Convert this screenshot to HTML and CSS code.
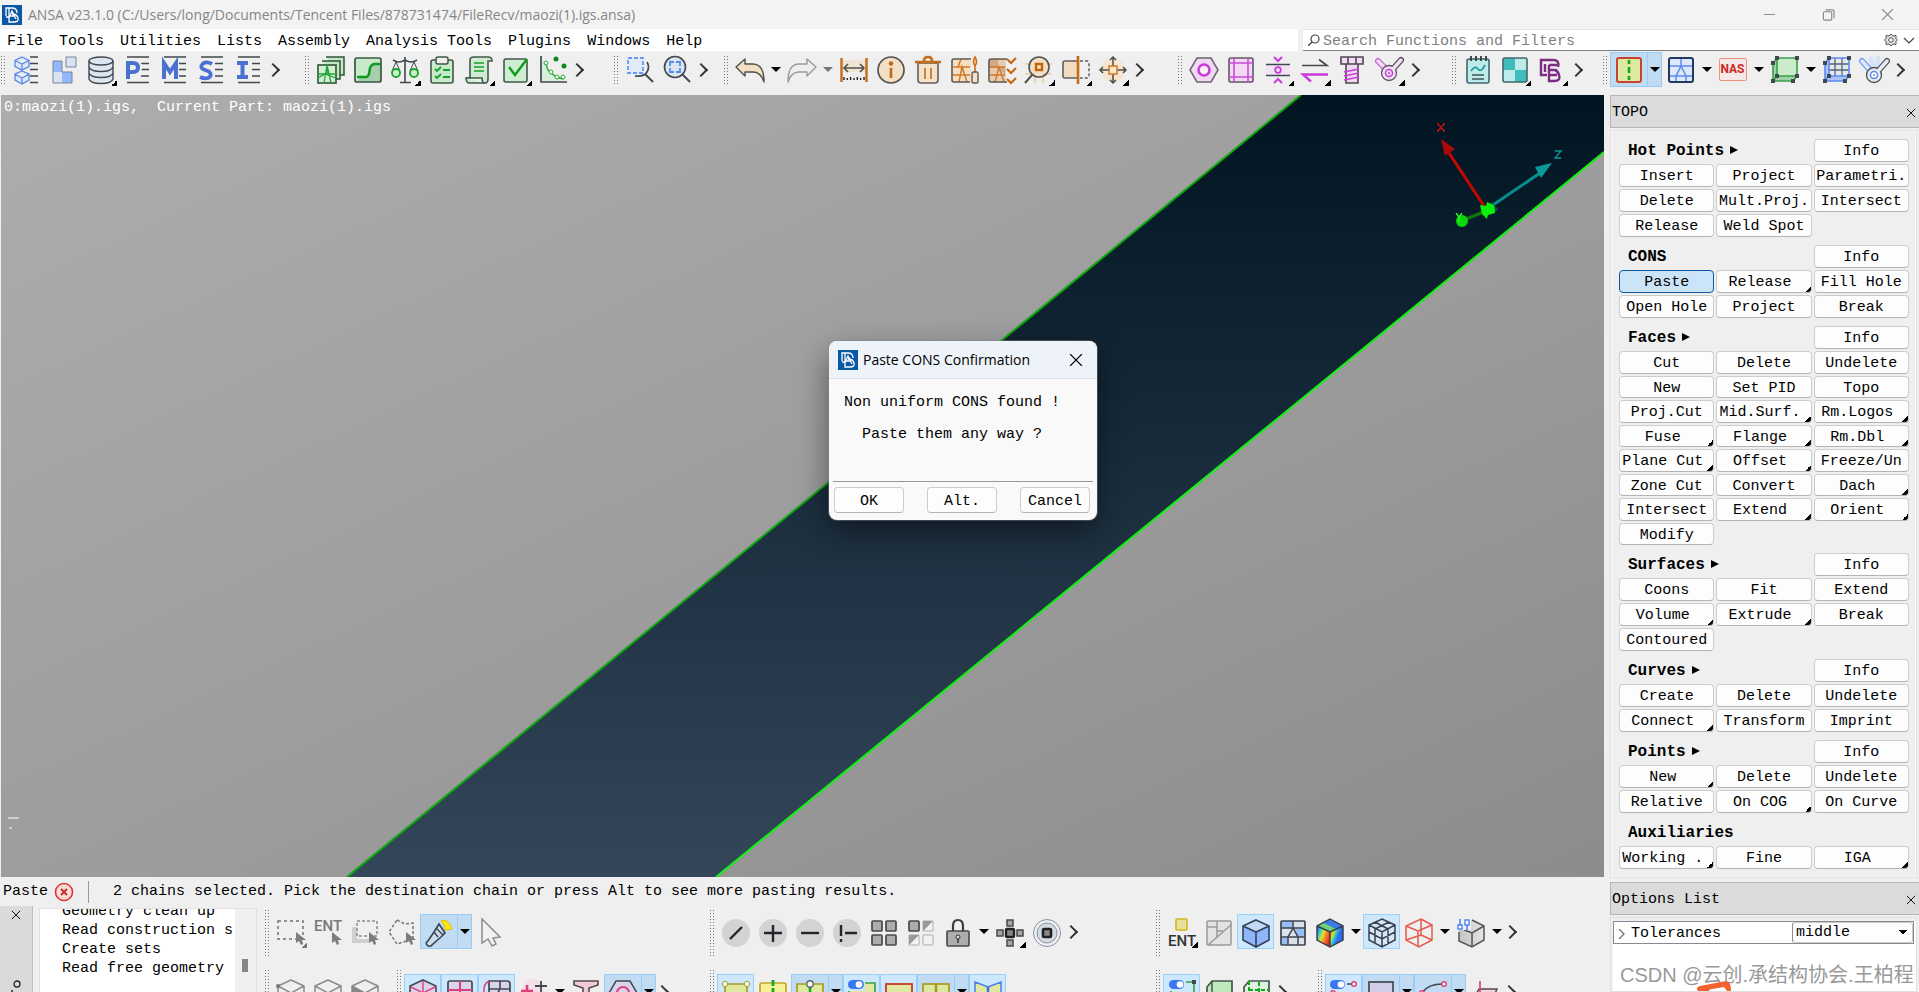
FILE: index.html
```html
<!DOCTYPE html>
<html lang="en">
<head>
<meta charset="utf-8">
<title>ANSA v23.1.0</title>
<link rel="stylesheet" href="styles.css">
</head>
<body>
<svg class="defs" aria-hidden="true">
  <defs>
    <symbol id="logo" viewBox="0 0 20 20"><rect width="20" height="20" fill="#0a57a4"/><path d="M4 11V3h6q5 0 5 5M4 12h3M7 3v14h5q5 0 4-4-1-4-6-4M7 13l3-7 4 8M8 11h5" fill="none" stroke="#fff" stroke-width="1.300"/></symbol>
    <symbol id="cross" viewBox="0 0 12 12"><path d="M1 1l10 10M11 1L1 11" fill="none" stroke="currentColor" stroke-width="1.100"/></symbol>
    <symbol id="cursor" viewBox="0 0 10 13"><path d="M0 0v11l3-2 2 4 2-1-1-4h4z" fill="#7d7d7d"/></symbol>
    <symbol id="lines" viewBox="0 0 30 30"><path d="M4 2h22M18 8.500h8M18 14.500h8M18 21h8M4 27.500h22" stroke="#42484f" stroke-width="1.700"/></symbol>
    <symbol id="graycube" viewBox="0 0 30 30"><path d="M15 2l13 6v14l-13 7-13-7V8zM2 8l13 7 13-7M15 15v14" fill="none" stroke="#8b8b8b" stroke-width="1.500" stroke-linejoin="round"/></symbol>
    <linearGradient id="band" x1="0" y1="0" x2="0" y2="1"><stop offset="0" stop-color="#011421"/><stop offset=".5" stop-color="#1a2d3d"/><stop offset="1" stop-color="#34475a"/></linearGradient>
    <linearGradient id="heat" x1="0" y1="0" x2="1" y2=".6"><stop offset="0" stop-color="#2451e8"/><stop offset=".25" stop-color="#28c3d5"/><stop offset=".5" stop-color="#d9e52a"/><stop offset=".75" stop-color="#f4772a"/><stop offset="1" stop-color="#e52b20"/></linearGradient>
    <linearGradient id="heat2" x1="0" y1="0" x2="1" y2=".6"><stop offset="0" stop-color="#e52b20"/><stop offset=".2" stop-color="#f4a72a"/><stop offset=".35" stop-color="#c9e52a"/><stop offset=".5" stop-color="#28c3d5"/><stop offset=".7" stop-color="#2f6af0"/></linearGradient>
    <linearGradient id="steel" x1="0" y1="0" x2="1" y2="0"><stop offset="0" stop-color="#c4c4c4"/><stop offset="1" stop-color="#e4e4e4"/></linearGradient>
  </defs>
</svg>

<header class="titlebar">
  <svg class="app-logo"><use href="#logo"/></svg>
  <span class="title">ANSA v23.1.0 (C:/Users/long/Documents/Tencent Files/878731474/FileRecv/maozi(1).igs.ansa)</span>
  <div class="controls">
    <button type="button" aria-label="Minimize"><svg viewBox="0 0 14 14"><path d="M1 7h12" stroke="currentColor"/></svg></button>
    <button type="button" aria-label="Restore"><svg viewBox="0 0 14 14"><rect x="1.500" y="4" width="9" height="9" rx="1.500" fill="none" stroke="currentColor" stroke-width="1.200"/><path d="M4 2h7q2 0 2 2v7" fill="none" stroke="currentColor" stroke-width="1.200"/></svg></button>
    <button type="button" aria-label="Close"><svg><use href="#cross"/></svg></button>
  </div>
</header>

<div class="menurow">
  <nav class="menu">
    <button type="button">File</button><button type="button">Tools</button><button type="button">Utilities</button><button type="button">Lists</button><button type="button">Assembly</button><button type="button">Analysis Tools</button><button type="button">Plugins</button><button type="button">Windows</button><button type="button">Help</button>
  </nav>
  <div class="search">
    <svg class="s12" viewBox="0 0 12 12"><circle cx="7" cy="5" r="4" fill="none" stroke="#444" stroke-width="1.200"/><path d="M4 8L0 12" stroke="#444" stroke-width="1.300"/></svg>
    <input type="text" aria-label="Search Functions and Filters" placeholder="Search Functions and Filters">
    <button type="button" aria-label="Settings"><svg class="s14" viewBox="0 0 14 14"><path d="M7 1l2 2 3-.500v3L13.500 7 12 8.500v3L9 11l-2 2-2-2-3 .500v-3L.500 7 2 5.500v-3L5 3z" fill="#ddd" stroke="#555"/><circle cx="7" cy="7" r="2.200" fill="#fff" stroke="#555"/></svg></button>
    <button type="button" aria-label="More"><svg class="s12" viewBox="0 0 12 12"><path d="M1 4l5 5 5-5" fill="none" stroke="#444" stroke-width="1.200"/></svg></button>
  </div>
</div>

<div class="topbars">
  <div class="tb">
    <i class="grip"></i>
    <button class="tool" aria-label="Parts"><svg viewBox="0 0 30 30"><use href="#lines"/><path d="M2 1h16v28H2z" fill="#efefef"/><path d="M10 2l7 3.500v6L10 15l-7-3.500v-6zM3 5.500L10 9l7-3.500M10 9v6M10 16l7 3v6l-7 4-7-4v-6zM3 19l7 4 7-4M10 23v5" fill="#dbe7fb" stroke="#5b87e0" stroke-width="1.300"/></svg></button>
    <button class="tool" aria-label="Properties"><svg viewBox="0 0 30 30"><path d="M4 6h9v11h10v11H4z" fill="#93b8fb"/><path d="M4 17h9v11H4zM17 2h10v10H17z" fill="#d7e3f4"/><path d="M4 6h9v11h10v11H4zM17 2h10v10H17z" fill="none" stroke="#788594" stroke-width="1"/></svg></button>
    <button class="tool fly" aria-label="Database"><svg viewBox="0 0 30 30"><path d="M3 6v18c2 6 22 6 24 0V6" fill="#dce6f3"/><ellipse cx="15" cy="6" rx="12" ry="4" fill="#dce6f3"/><path d="M3 6v18c2 6 22 6 24 0V6M3 12c2 6 22 6 24 0M3 18c2 6 22 6 24 0" fill="none" stroke="#42484f" stroke-width="1.400"/><ellipse cx="15" cy="6" rx="12" ry="4" fill="none" stroke="#42484f" stroke-width="1.400"/></svg></button>
    <button class="tool" aria-label="Property list"><svg viewBox="0 0 30 30"><use href="#lines"/><path d="M5 23V8h5q5 0 5 4.500T10 17H6" fill="none" stroke="#efefef" stroke-width="8"/><path d="M5 24V8h5q5 0 5 4.500T10 17H6" fill="none" stroke="#4a70d2" stroke-width="4"/></svg></button>
    <button class="tool" aria-label="Material list"><svg viewBox="0 0 30 30"><use href="#lines"/><path d="M2 5h17v20H2z" fill="#efefef"/><path d="M4 24V8l6 9 6-9v16" fill="none" stroke="#4a70d2" stroke-width="4"/></svg></button>
    <button class="tool" aria-label="Set list"><svg viewBox="0 0 30 30"><use href="#lines"/><path d="M2 5h15v20H2z" fill="#efefef"/><path d="M15 9q-5-3-9-.500-4 4 1 6l5 2q4 4-1 6.500-4 1-8-1" fill="none" stroke="#4a70d2" stroke-width="3.800"/></svg></button>
    <button class="tool" aria-label="Include list"><svg viewBox="0 0 30 30"><use href="#lines"/><path d="M2 5h13v20H2z" fill="#efefef"/><path d="M3 8h11M3 22h11M8.500 8v14" fill="none" stroke="#4a70d2" stroke-width="4"/></svg></button>
    <button class="chev" aria-label="More"></button>
  </div>
  <div class="tb">
    <i class="grip"></i>
    <button class="tool" aria-label="Mesh"><svg viewBox="0 0 30 30"><path d="M10 2h18v18h-4M6 6h18v18h-4" fill="#c5e6c7" stroke="#2f5636" stroke-width="1.500"/><rect x="2" y="10" width="18" height="18" fill="#d3efd3" stroke="#2f5636" stroke-width="1.600"/><path d="M2 19h18M2 23l7-4 11 4M8 28l3-18 4 18M11 10v9" stroke="#22a53a" stroke-width="1.300" fill="none"/></svg></button>
    <button class="tool" aria-label="Function"><svg viewBox="0 0 30 30"><rect x="2" y="3" width="26" height="24" rx="2" fill="#c9e9cc"/><path d="M8 22h5q3 0 3-5t4-7h8v17H3z" fill="#a7cfae"/><rect x="2" y="3" width="26" height="24" rx="2" fill="none" stroke="#39593e" stroke-width="1.700"/><path d="M4 22h9q3 0 3.500-6T21 9h6" fill="none" stroke="#0e9a1e" stroke-width="2.600"/></svg></button>
    <button class="tool fly" aria-label="Balance"><svg viewBox="0 0 30 30"><path d="M15 2v25M10 27.500h11M3 5q6 4 12 0 6 4 12 0" fill="none" stroke="#42484f" stroke-width="1.600"/><path d="M6 7l-4 9M6 7l4 9M24 7l-4 9M24 7l4 9" stroke="#42484f"/><circle cx="6" cy="18" r="4" fill="#c9f0cc" stroke="#1aa52a" stroke-width="1.800"/><circle cx="24" cy="18" r="4" fill="#c9f0cc" stroke="#1aa52a" stroke-width="1.800"/></svg></button>
    <button class="tool" aria-label="Checks"><svg viewBox="0 0 30 30"><rect x="4" y="5" width="22" height="23" rx="2" fill="#c9e9cc" stroke="#42584a" stroke-width="1.600"/><rect x="9" y="2" width="12" height="7" rx="2" fill="#eee" stroke="#42584a" stroke-width="1.500"/><path d="M8 14l2 2 4-4M8 21l2 2 4-4" fill="none" stroke="#14a024" stroke-width="1.800"/><path d="M16 15h7M16 22h7" stroke="#14a024" stroke-width="2"/></svg></button>
    <button class="tool fly" aria-label="Script"><svg viewBox="0 0 30 30"><path d="M10 2h14q4 0 4 4h-4v18q0 4-3 4H6q-4 0-4-5h4V5q0-3 4-3z" fill="#d0ebd2" stroke="#42584a" stroke-width="1.600"/><path d="M2 23h16q0 5 3 5" fill="#e9f5ea" stroke="#42584a" stroke-width="1.600"/><path d="M10 8h10M10 12h10M10 16h10" stroke="#14a024" stroke-width="1.600"/></svg></button>
    <button class="tool fly" aria-label="Verify"><svg viewBox="0 0 30 30"><rect x="3" y="4" width="23" height="23" rx="2" fill="#cdeed0" stroke="#42584a" stroke-width="1.600"/><path d="M8 12l6 8L26 4" fill="none" stroke="#0f9c1c" stroke-width="2.400"/></svg></button>
    <button class="tool" aria-label="Plot"><svg viewBox="0 0 30 30"><path d="M4 2v25h24L18 22 10 16z" fill="#d8efd9"/><path d="M3 1v26h26" fill="none" stroke="#42484f" stroke-width="1.700"/><path d="M7 7l3 8 8 7 7 2" fill="none" stroke="#2aa83c" stroke-width="1.400"/><g fill="#fff" stroke="#2aa83c"><circle cx="8" cy="8" r="2"/><circle cx="13" cy="17" r="2"/><circle cx="19" cy="22" r="2"/><circle cx="25" cy="22" r="2"/></g><circle cx="18" cy="4" r="2.500" fill="#118a1c"/><circle cx="26" cy="11" r="2.500" fill="#118a1c"/></svg></button>
    <button class="chev" aria-label="More"></button>
  </div>
  <div class="tb">
    <i class="grip"></i>
    <button class="tool" aria-label="Zoom window"><svg viewBox="0 0 30 30"><path d="M22 7q3 5 0 10-3 5-12 4" fill="none" stroke="#42484f" stroke-width="1.700"/><rect x="3" y="3" width="15" height="15" fill="#e2ebf8" stroke="#639af8" stroke-width="1.800" stroke-dasharray="4 2"/><path d="M20 19l8 8" stroke="#42484f" stroke-width="1.900"/></svg></button>
    <button class="tool" aria-label="Zoom all"><svg viewBox="0 0 30 30"><circle cx="13" cy="12" r="10.500" fill="#dfe5ee" stroke="#42484f" stroke-width="1.600"/><path d="M8 11V7h4M14 7h4v4M18 13v4h-4M12 17H8v-4" fill="none" stroke="#4e8df6" stroke-width="1.800"/><path d="M20 19l8 8" stroke="#42484f" stroke-width="1.900"/></svg></button>
    <button class="chev" aria-label="More"></button>
  </div>
  <div class="tb">
    <i class="grip"></i>
    <button class="tool" aria-label="Undo"><svg viewBox="0 0 30 30"><path d="M1 12l9-8v5h8q11 0 11 18-3-10-11-10h-8v4z" fill="#f3e0c4" stroke="#51504c" stroke-width="1.400" stroke-linejoin="round"/></svg></button>
    <button class="drop" aria-label="Undo history"></button>
    <button class="tool" aria-label="Redo"><svg viewBox="0 0 30 30"><path d="M29 12l-9-8v5h-8Q1 9 1 27q3-10 11-10h8v4z" fill="#eee" stroke="#9a9a9a" stroke-width="1.400" stroke-linejoin="round"/></svg></button>
    <button class="drop gray" aria-label="Redo history"></button>
    <button class="tool" aria-label="Measure"><svg viewBox="0 0 30 30"><path d="M3 5h24v12H3z" fill="#f0e4d4"/><path d="M2.500 3v24M27.500 3v24" stroke="#c66c18" stroke-width="2.400"/><path d="M6 13h18M9 9l-4 4 4 4M21 9l4 4-4 4" fill="none" stroke="#50504e" stroke-width="1.600"/><path d="M5 25v-3M8.300 25v-2M11.600 25v-3M15 25v-2M18.300 25v-3M21.600 25v-2M25 25v-3" stroke="#222" stroke-width="1.400"/></svg></button>
    <button class="tool" aria-label="Information"><svg viewBox="0 0 30 30"><circle cx="15" cy="15" r="13" fill="#f3dfc3" stroke="#55534f" stroke-width="1.700"/><circle cx="15" cy="8.500" r="2.200" fill="#bd6b12"/><path d="M15 13v10" stroke="#bd6b12" stroke-width="2.600"/></svg></button>
    <button class="tool" aria-label="Delete"><svg viewBox="0 0 30 30"><path d="M5 8h20v17q0 3-3 3H8q-3 0-3-3z" fill="#f4e3cb" stroke="#62605c" stroke-width="1.600"/><path d="M2 7h26M11 6q0-4 4-4t4 4" fill="none" stroke="#c66c18" stroke-width="2.600"/><path d="M12 13v11M18 13v11" stroke="#c66c18" stroke-width="1.600"/></svg></button>
    <button class="tool" aria-label="Mesh tool"><svg viewBox="0 0 30 30"><path d="M2 4h19v23H2z" fill="#f5dfc2"/><path d="M3 12h17M3 20h17M8 12l3-8M9 27l3-15 5 15" fill="none" stroke="#cf7a2a" stroke-width="1.500"/><path d="M21 4H4q-2 0-2 2v19q0 2 2 2h16" fill="none" stroke="#5f5951" stroke-width="1.600"/><path d="M25 2q-3 5 0 9 3-4 0-9zM25 11v6" fill="#f5dfc2" stroke="#cf6d18" stroke-width="1.600"/><rect x="22" y="17" width="6" height="11" rx="1.500" fill="#f2e2cc" stroke="#5f5951" stroke-width="1.400"/></svg></button>
    <button class="tool" aria-label="Mesh checks"><svg viewBox="0 0 30 30"><path d="M2 4h17v23H2z" fill="#e6cbb0"/><path d="M2 4h9v9H2zM11 12h7v8z" fill="#d3a987"/><path d="M3 12h15M3 20h15M8 27l4-15 5 15" fill="none" stroke="#cf7a2a" stroke-width="1.500"/><path d="M20 4H4q-2 0-2 2v19q0 2 2 2h16" fill="none" stroke="#5f5951" stroke-width="1.600"/><path d="M20 4l4 4 5-5M20 14l4 4 5-5M20 24l4 4 5-5" fill="none" stroke="#c9640c" stroke-width="2"/></svg></button>
    <button class="tool fly" aria-label="Inspect"><svg viewBox="0 0 30 30"><path d="M1 9h27M1 19h27M11 2v26M19 2v26" stroke="#f0cda2" stroke-width="1.600"/><circle cx="15" cy="12" r="10" fill="#f3dfc3" stroke="#55534f" stroke-width="1.600"/><rect x="12" y="9" width="6" height="6" fill="#f3dfc3" stroke="#c46209" stroke-width="2.400"/><path d="M8 20l-7 8" stroke="#55534f" stroke-width="2"/></svg></button>
    <button class="tool fly" aria-label="Cut plane"><svg viewBox="0 0 30 30"><rect x="2" y="6" width="15" height="17" rx="2" fill="#f1dcbf" stroke="#62605c" stroke-width="1.600"/><path d="M17 1v28" stroke="#c76a13" stroke-width="2.600"/><path d="M19 6h7q2 0 2 2v13q0 2-2 2h-7" fill="none" stroke="#62605c" stroke-width="1.500" stroke-dasharray="3 2"/></svg></button>
    <button class="tool fly" aria-label="Move"><svg viewBox="0 0 30 30"><circle cx="15" cy="15" r="12" fill="#f5e6d0"/><path d="M15 2v26M2 15h26M12 5l3-3 3 3M12 25l3 3 3-3M5 12l-3 3 3 3M25 12l3 3-3 3" fill="none" stroke="#4c4c4a" stroke-width="1.500"/><rect x="11" y="11" width="8" height="8" fill="#fbe6c8" stroke="#cc7a2c" stroke-width="1.500"/></svg></button>
    <button class="chev" aria-label="More"></button>
  </div>
  <div class="tb">
    <i class="grip"></i>
    <button class="tool" aria-label="Hexagon"><svg viewBox="0 0 30 30"><path d="M8 3h14l7 12-7 12H8L1 15z" fill="#f1d9f3" stroke="#6d6270" stroke-width="1.500"/><circle cx="15" cy="15" r="5.500" fill="#fbeefb" stroke="#cb3bdb" stroke-width="2.600"/></svg></button>
    <button class="tool" aria-label="Frame"><svg viewBox="0 0 30 30"><rect x="3" y="3" width="24" height="24" rx="2" fill="#f1d9f3" stroke="#5f5762" stroke-width="1.600"/><path d="M3 8h24M3 22h24M8 3v24M22 3v24" stroke="#cb4ad8" stroke-width="1.600"/></svg></button>
    <button class="tool fly" aria-label="Midline"><svg viewBox="0 0 30 30"><path d="M3 10h24v10H3z" fill="#f2e3f3"/><path d="M3 9.500h24M3 20.500h24" stroke="#42484f" stroke-width="1.600"/><path d="M11 2l4 4 4-4M11 28l4-4 4 4" fill="none" stroke="#cb3bdb" stroke-width="2"/><circle cx="15" cy="15" r="2.800" fill="#f9e9fb" stroke="#cb3bdb" stroke-width="1.800"/></svg></button>
    <button class="tool fly" aria-label="Swap"><svg viewBox="0 0 30 30"><path d="M2 10.500h25l-8-6" fill="none" stroke="#42484f" stroke-width="1.600"/><path d="M28 19.500H3l8 7" fill="none" stroke="#cb3bdb" stroke-width="2.400"/></svg></button>
    <button class="tool" aria-label="Bolt"><svg viewBox="0 0 30 30"><path d="M4 2h22v7H4zM11 2v7M19 2v7M9 9h12v19H9z" fill="#f1d9f3" stroke="#4d4850" stroke-width="1.600"/><path d="M7 17l15-3M7 21l15-3M7 25l15-3" stroke="#cb3bdb" stroke-width="1.500"/></svg></button>
    <button class="tool fly" aria-label="Connector"><svg viewBox="0 0 30 30"><path d="M4 6l7 7" stroke="#cb5ad8" stroke-width="6" stroke-linecap="round"/><path d="M4 6l7 7" stroke="#f4dff6" stroke-width="3.500" stroke-linecap="round"/><path d="M27 5l-8 9" stroke="#504b54" stroke-width="6" stroke-linecap="round"/><circle cx="15" cy="18" r="7.500" fill="#f1dff4" stroke="#605a64" stroke-width="1.300"/><path d="M27 5l-8 9" stroke="#f1dff4" stroke-width="3.500" stroke-linecap="round"/><circle cx="15" cy="18" r="3.500" fill="none" stroke="#cb3bdb" stroke-width="1.500"/><circle cx="15" cy="18" r="1" fill="#cb3bdb"/></svg></button>
    <button class="chev" aria-label="More"></button>
  </div>
  <div class="tb">
    <i class="grip"></i>
    <button class="tool" aria-label="Report"><svg viewBox="0 0 30 30"><rect x="4" y="4" width="22" height="24" rx="2" fill="#bdeaea" stroke="#42686a" stroke-width="1.600"/><path d="M8 1v5M13 1v5M18 1v5M23 1v5" stroke="#34383c" stroke-width="1.800"/><path d="M8 16q4-6 7-2t7-4" fill="none" stroke="#1c9a9a" stroke-width="1.700"/><path d="M9 20h12M9 24h12" stroke="#3f5657" stroke-width="1.500"/></svg></button>
    <button class="tool fly" aria-label="Checkerboard"><svg viewBox="0 0 30 30"><rect x="3" y="3" width="24" height="24" rx="2" fill="#bdeaea"/><path d="M3 3h12v12H3zM15 15h12v12H15z" fill="#41bcbc"/><rect x="3" y="3" width="24" height="24" rx="2" fill="none" stroke="#42686a" stroke-width="1.600"/></svg></button>
    <button class="tool fly" aria-label="Beta"><svg viewBox="0 0 30 30"><path d="M10 20H4V5h12q7 0 5 7M12 10h8M12 15h8M12 10v16h5q7 0 5-6-1-4-4-5M12 20h8M8 9v8" fill="none" stroke="#7d2b83" stroke-width="2.400"/></svg></button>
    <button class="chev" aria-label="More"></button>
  </div>
  <div class="tb">
    <i class="grip"></i>
    <span class="split"><button class="tool" aria-label="Topology"><svg viewBox="0 0 30 30"><rect x="3" y="3" width="24" height="24" rx="2" fill="#dde8a0" stroke="#c8432f" stroke-width="2"/><path d="M15 5v4M15 12v6M15 21v4" stroke="#17a622" stroke-width="2.600"/></svg></button><button class="drop" aria-label="Topology options"></button></span>
    <button class="tool" aria-label="Mesh module"><svg viewBox="0 0 30 30"><rect x="3" y="3" width="24" height="24" rx="2" fill="#dde8fa"/><path d="M3 11h24M3 21h24M15 3v8l-5 10v6M15 11l5 10v6" fill="none" stroke="#5b8af0" stroke-width="1.500"/><rect x="3" y="3" width="24" height="24" rx="2" fill="none" stroke="#20375f" stroke-width="2"/></svg></button>
    <button class="drop" aria-label="Mesh module options"></button>
    <button class="tool" aria-label="Nastran"><span class="nas">NAS</span></button>
    <button class="drop" aria-label="Solver options"></button>
    <button class="tool" aria-label="Box"><svg viewBox="0 0 30 30"><path d="M7 3h20v18l-4 5H3V8z" fill="#a3cfaa"/><path d="M7 3h20v18H7z" fill="#ccebcd"/><path d="M7 3h20v18H7zM3 8v18h20M3 8l4-5M3 26l4-5M23 26l4-5" fill="none" stroke="#35a244" stroke-width="1.600"/><path d="M5 1h4v4H5zM25 1h4v4h-4zM1 6h4v4H1zM5 19h4v4H5zM25 19h4v4h-4zM1 24h4v4H1zM21 24h4v4h-4z" fill="#42484f"/></svg></button>
    <button class="drop" aria-label="Box options"></button>
    <button class="tool" aria-label="Lattice"><svg viewBox="0 0 30 30"><path d="M7 3h20v18l-4 5H3V8z" fill="#a8c4f5"/><path d="M7 3h20v18H7z" fill="#e3e9f2"/><path d="M13 3v18M20 3v18M7 9h20M7 15h20" stroke="#5c6570" stroke-width="1.300"/><path d="M7 3h20v18H7zM3 8v18h20M3 8l4-5M3 26l4-5M23 26l4-5" fill="none" stroke="#5b8af0" stroke-width="1.600"/><path d="M5 1h4v4H5zM25 1h4v4h-4zM1 6h4v4H1zM5 19h4v4H5zM25 19h4v4h-4zM1 24h4v4H1zM21 24h4v4h-4z" fill="#42484f"/></svg></button>
    <button class="tool" aria-label="Kinematics"><svg viewBox="0 0 30 30"><path d="M12 4l2 9M19 3l-1 9" stroke="#d5e2f6" stroke-width="5" stroke-linecap="round"/><path d="M3 6l8 9" stroke="#6d9bf4" stroke-width="6" stroke-linecap="round"/><path d="M3 6l8 9" stroke="#dfe9fa" stroke-width="3.500" stroke-linecap="round"/><path d="M28 6l-8 9" stroke="#505760" stroke-width="6" stroke-linecap="round"/><circle cx="15" cy="20" r="7.500" fill="#e6e9ee" stroke="#505760" stroke-width="1.400"/><path d="M28 6l-8 9" stroke="#e6e9ee" stroke-width="3.500" stroke-linecap="round"/><circle cx="15" cy="20" r="3.500" fill="#fff" stroke="#5b8af0" stroke-width="1.500"/><circle cx="15" cy="20" r="1" fill="#5b8af0"/></svg></button>
    <button class="chev" aria-label="More"></button>
  </div>
</div>

<main class="main">
  <div class="left">
    <section class="viewport">
      <svg class="scene" viewBox="0 0 1603 782" preserveAspectRatio="none">
        <path d="M1300 0H1603V57L715 782H346z" fill="url(#band)"/>
        <path d="M1300 0L346 782" stroke="#0cab0c" stroke-width="2"/>
        <path d="M1603 57L715 782" stroke="#0df50d" stroke-width="2"/>
        <path d="M7 723h11M8 733h3" stroke="#fff"/>
      </svg>
      <svg class="triad" viewBox="0 0 130 110">
        <path d="M52 84L15 28" stroke="#cb0505" stroke-width="3"/>
        <path d="M7 14l14 10-10 7z" fill="#ab0a0a"/>
        <path d="M56 82l50-34" stroke="#0a8d8d" stroke-width="3"/>
        <path d="M118 38l-17 4 6 11z" fill="#0b9a9a"/>
        <path d="M58 76l6 9-9 5z" fill="#0b5555"/>
        <path d="M32 94l20-8" stroke="#0a7a0a" stroke-width="3"/>
        <path d="M46 80l6 1 1-4 7 3 1 8-7 2-1 4-5-5z" fill="#0bf00b"/>
        <circle cx="28" cy="96" r="6" fill="#0bd40b"/>
        <path d="M4 -1l6 7M10 -1L4 6M3 -1h2M9 -1h2M3 6h2M9 6h2" stroke="#cb1010" stroke-width="1.300"/>
        <path d="M121 26h6l-6 7h6" fill="none" stroke="#0b9a9a" stroke-width="1.300"/>
        <path d="M22 88l3 4 3-4M25 92v5" fill="none" stroke="#25ff25" stroke-width="1.300"/>
      </svg>
      <p class="partinfo">0:maozi(1).igs,&nbsp; Current Part: maozi(1).igs</p>
      <div class="dialog" role="dialog" aria-labelledby="dlg-title">
        <div class="dlg-head"><svg class="dlg-logo"><use href="#logo"/></svg><h2 id="dlg-title">Paste CONS Confirmation</h2><button type="button" aria-label="Close dialog"><svg class="s14"><use href="#cross"/></svg></button></div>
        <div class="dlg-body"><p>Non uniform CONS found !</p><p class="ask">Paste them any way ?</p></div>
        <div class="dlg-foot"><button type="button">OK</button><button type="button">Alt.</button><button type="button">Cancel</button></div>
      </div>
    </section>

    <div class="status">
      <span class="mode">Paste</span>
      <button type="button" aria-label="Cancel function"><svg viewBox="0 0 20 20"><circle cx="10" cy="10" r="8.500" fill="#fbdcd8" stroke="#d8392e" stroke-width="1.600"/><path d="M7 7l6 6M13 7l-6 6" stroke="#c92b20" stroke-width="1.800"/></svg></button>
      <span class="msg">2 chains selected. Pick the destination chain or press Alt to see more pasting results.</span>
    </div>

    <div class="bottom">
      <aside class="logstrip"><button type="button" aria-label="Close log"><svg class="s10"><use href="#cross"/></svg></button><svg class="pin" viewBox="0 0 14 12"><circle cx="8" cy="4" r="3" fill="none" stroke="#222" stroke-width="1.300"/><path d="M2 11h2" stroke="#222" stroke-width="1.500"/></svg></aside>
      <div class="log">
        <ul><li>Geometry clean up</li><li>Read construction s</li><li>Create sets</li><li>Read free geometry</li></ul>
        <div class="scroll"><i></i></div>
      </div>
      <div class="dock">
        <div class="col">
          <div class="tb">
            <i class="grip"></i>
            <button class="tool fly gray" aria-label="Box select"><svg viewBox="0 0 30 30"><path d="M2 3h25v18H2z" fill="none" stroke="#707070" stroke-width="1.500" stroke-dasharray="3 3"/><use href="#cursor" x="20" y="14" width="10" height="13"/></svg></button>
            <button class="tool" aria-label="Entity select"><svg viewBox="0 0 30 30"><text x="1" y="13" class="ent dim">ENT</text><use href="#cursor" x="19" y="14" width="10" height="13"/></svg></button>
            <button class="tool" aria-label="Shadow select"><svg viewBox="0 0 30 30"><path d="M2 9h5v12h12v4H2z" fill="#cfcfcf"/><path d="M7 3h20v15H7z" fill="none" stroke="#8a8a8a" stroke-width="1.500" stroke-dasharray="3 2"/><use href="#cursor" x="19" y="14" width="10" height="13"/></svg></button>
            <button class="tool" aria-label="Polygon select"><svg viewBox="0 0 30 30"><path d="M10 2l8 4 8-1v16l-16 5-8-12z" fill="none" stroke="#777" stroke-width="1.500" stroke-dasharray="3 2"/><use href="#cursor" x="19" y="14" width="10" height="13"/></svg></button>
            <span class="split"><button class="tool" aria-label="Highlight"><svg viewBox="0 0 30 30"><path d="M17 3q7-3 11 8l-7 1q0-6-4-9z" fill="#ffe81a" stroke="#e1b900"/><path d="M15 6l6 9-4 4-8 7q-3 4-6 1-2-2 1-4l6-9z" fill="#cadcf0" stroke="#38424e" stroke-width="1.600"/><path d="M12 10l7 7M10 14l4 5" stroke="#38424e" stroke-width="1.400"/></svg></button><button class="drop" aria-label="Highlight options"></button></span>
            <button class="tool" aria-label="Pointer"><svg viewBox="0 0 30 30"><path d="M6 1l18 18-7 1 3 6-4 2-4-7-6 4z" fill="#f2f2f2" stroke="#8c8c8c" stroke-width="1.500"/></svg></button>
          </div>
          <div class="pair">
            <div class="tb"><i class="grip"></i>
              <button class="tool" aria-label="Cube points"><svg viewBox="0 0 30 30"><use href="#graycube"/><circle cx="2" cy="8" r="2" fill="#777"/></svg></button>
              <button class="tool" aria-label="Cube wire"><svg viewBox="0 0 30 30"><use href="#graycube"/></svg></button>
              <button class="tool" aria-label="Cube face"><svg viewBox="0 0 30 30"><use href="#graycube"/><path d="M2 8l13 7v14L2 22z" fill="#888"/></svg></button>
            </div>
            <div class="tb near"><i class="grip"></i>
              <button class="tool lit" aria-label="Pink cube"><svg viewBox="0 0 30 30"><path d="M15 2l13 6v14l-13 7-13-7V8z" fill="#d9d3ec" stroke="#42484f" stroke-width="1.600"/><path d="M3 9l12 6 12-6M15 3v26" fill="none" stroke="#dd3f7d" stroke-width="1.400"/></svg></button>
              <button class="tool lit" aria-label="Pink grid"><svg viewBox="0 0 30 30"><rect x="3" y="3" width="24" height="25" rx="2" fill="#d9d3ec" stroke="#42484f" stroke-width="1.700"/><path d="M3 12h24M15 3v24" stroke="#dd3f7d" stroke-width="2"/></svg></button>
              <button class="tool lit" aria-label="Pink blocks"><svg viewBox="0 0 30 30"><path d="M7 3h18q3 0 3 3v20H7z" fill="#d9d3ec" stroke="#42484f" stroke-width="1.700"/><path d="M7 11h21M18 3v8l-4 7" stroke="#42484f" stroke-width="1.600" fill="none"/><path d="M7 3q-5 3-5 8v12" fill="none" stroke="#dd3f7d" stroke-width="1.500"/></svg></button>
              <button class="tool" aria-label="Add"><svg viewBox="0 0 30 30"><circle cx="14" cy="12" r="11" fill="#f3dfe6"/><path d="M8 7v12M2 13h12" stroke="#dd3f7d" stroke-width="2.600"/><path d="M22 3v11M16 8h12" stroke="#42484f" stroke-width="1.800"/></svg></button>
              <button class="drop" aria-label="Add options"></button>
              <button class="tool" aria-label="Beam"><svg viewBox="0 0 30 30"><path d="M3 3h24v4l-9 3v18h-6V10L3 7z" fill="#f3c9d8" stroke="#504850" stroke-width="1.600"/></svg></button>
              <span class="split"><button class="tool" aria-label="Hex view"><svg viewBox="0 0 30 30"><path d="M8 3h14l7 12-7 12H8L1 15z" fill="#d9d3ec" stroke="#42484f" stroke-width="1.500"/><circle cx="15" cy="15" r="6" fill="none" stroke="#dd3f7d" stroke-width="2"/></svg></button><button class="drop" aria-label="Hex options"></button></span>
              <button class="chev" aria-label="More"></button>
            </div>
          </div>
        </div>
        <div class="col">
          <div class="tb">
            <i class="grip"></i>
            <button class="tool" aria-label="Line"><svg viewBox="0 0 30 30"><circle cx="15" cy="15" r="14" fill="#d3d3d3"/><path d="M9 21L21 9" stroke="#23262a" stroke-width="2.400"/></svg></button>
            <button class="tool" aria-label="Plus"><svg viewBox="0 0 30 30"><circle cx="15" cy="15" r="14" fill="#d3d3d3"/><path d="M15 7v17M6 15h18" stroke="#23262a" stroke-width="2.400"/></svg></button>
            <button class="tool" aria-label="Minus"><svg viewBox="0 0 30 30"><circle cx="15" cy="15" r="14" fill="#d3d3d3"/><path d="M6 15h18" stroke="#23262a" stroke-width="2.400"/></svg></button>
            <button class="tool" aria-label="Not"><svg viewBox="0 0 30 30"><circle cx="15" cy="15" r="14" fill="#d3d3d3"/><path d="M9 7v11M9 21v3M13 15h12" stroke="#23262a" stroke-width="2.400"/></svg></button>
            <button class="tool" aria-label="All"><svg viewBox="0 0 30 30"><g fill="#adadad" stroke="#484848" stroke-width="1.700"><rect x="3" y="3" width="10" height="10" rx="1"/><rect x="17" y="3" width="10" height="10" rx="1"/><rect x="3" y="17" width="10" height="10" rx="1"/><rect x="17" y="17" width="10" height="10" rx="1"/></g></svg></button>
            <button class="tool" aria-label="Invert"><svg viewBox="0 0 30 30"><rect x="3" y="3" width="10" height="10" rx="1" fill="#adadad" stroke="#484848" stroke-width="1.700"/><g fill="#f2f2f2" stroke="#c3c3c3" stroke-width="1.500"><rect x="17" y="3" width="10" height="10" rx="1"/><rect x="3" y="17" width="10" height="10" rx="1"/><rect x="17" y="17" width="10" height="10" rx="1"/></g><path d="M17 13V3h10zM3 27V17h10z" fill="#999"/></svg></button>
            <button class="tool" aria-label="Lock"><svg viewBox="0 0 30 30"><path d="M10 14V8q0-6 5-6t5 6v6" fill="none" stroke="#3d3d3d" stroke-width="2.200"/><rect x="4" y="13" width="22" height="15" rx="1" fill="#adadad" stroke="#484848" stroke-width="1.600"/><circle cx="15" cy="19" r="2" fill="#ddd" stroke="#333"/><path d="M15 21v4" stroke="#333" stroke-width="1.500"/></svg></button>
            <button class="drop" aria-label="Lock options"></button>
            <button class="tool fly" aria-label="Neighbours"><svg viewBox="0 0 30 30"><g fill="#a6a6a6" stroke="#484848" stroke-width="1.500"><rect x="12" y="2" width="6" height="6"/><rect x="12" y="22" width="6" height="6"/><rect x="2" y="12" width="6" height="6"/><rect x="22" y="12" width="6" height="6"/></g><rect x="11" y="11" width="8" height="8" rx="1" fill="#888" stroke="#222" stroke-width="2.400"/></svg></button>
            <button class="tool" aria-label="Focus"><svg viewBox="0 0 30 30"><circle cx="15" cy="15" r="13.500" fill="#eef0f3" stroke="#8993a2"/><circle cx="15" cy="15" r="10" fill="#d3dae3" stroke="#8993a2"/><rect x="11" y="11" width="8" height="8" rx="1" fill="#888" stroke="#222" stroke-width="2.600"/></svg></button>
            <button class="chev" aria-label="More"></button>
          </div>
          <div class="tb">
            <i class="grip"></i>
            <button class="tool lit" aria-label="Edges"><svg viewBox="0 0 30 30"><path d="M4 6h22v22H4z" fill="#e0e99f" stroke="#ab9a25" stroke-width="1.700"/><circle cx="4" cy="6" r="2.700" fill="#fff" stroke="#ab9a25"/><circle cx="26" cy="6" r="2.700" fill="#fff" stroke="#ab9a25"/></svg></button>
            <button class="tool" aria-label="Green edges"><svg viewBox="0 0 30 30"><rect x="2" y="5" width="26" height="23" rx="2" fill="#f6f096" stroke="#c3a527" stroke-width="1.700"/><path d="M15 2v26M2 16h26" stroke="#17a622" stroke-width="2.800" stroke-dasharray="6 2"/></svg></button>
            <span class="split"><button class="tool" aria-label="Hot points"><svg viewBox="0 0 30 30"><path d="M2 6h26v22H2z" fill="#dde8a0" stroke="#ab9a25" stroke-width="1.700"/><path d="M15 9v19" stroke="#17a622" stroke-width="2.600"/><circle cx="15" cy="6" r="3.200" fill="#fff" stroke="#666" stroke-width="1.400"/></svg></button><button class="drop" aria-label="Hot point options"></button></span>
            <button class="tool lit" aria-label="Auto"><svg viewBox="0 0 30 30"><path d="M2 5h26v22H2z" fill="#e0e99f" stroke="#35a244" stroke-width="1.700"/><rect x="0" y="1" width="18" height="12" fill="#cde7fd"/><rect x="1" y="2" width="16" height="9" rx="4.500" fill="#3a78f0"/><circle cx="12" cy="6.500" r="3.300" fill="#fff"/></svg></button>
            <button class="tool lit" aria-label="Red edges"><svg viewBox="0 0 30 30"><rect x="2" y="6" width="26" height="23" fill="#e0e99f" stroke="#c8432f" stroke-width="1.900"/></svg></button>
            <span class="split"><button class="tool" aria-label="Joined"><svg viewBox="0 0 30 30"><rect x="2" y="6" width="26" height="23" fill="#dde8a0" stroke="#ab9a25" stroke-width="1.700"/><path d="M15 6v22" stroke="#ab9a25" stroke-width="2.600"/></svg></button><button class="drop" aria-label="Joined options"></button></span>
            <button class="tool lit" aria-label="Fold"><svg viewBox="0 0 30 30"><path d="M2 4l13 5 13-5v23l-13 3-13-3z" fill="#e0e99f" stroke="#4b7df0" stroke-width="1.500"/><path d="M15 9v20" stroke="#3a6df0" stroke-width="2.500"/></svg></button>
          </div>
        </div>
        <div class="col">
          <div class="tb">
            <i class="grip"></i>
            <button class="tool fly" aria-label="Entity colour"><svg viewBox="0 0 30 30"><rect x="9" y="1" width="11" height="11" rx="1" fill="#e6e09b" stroke="#d0b91f" stroke-width="1.600"/><text x="1" y="28" class="ent">ENT</text></svg></button>
            <button class="tool" aria-label="Half shade"><svg viewBox="0 0 30 30"><rect x="3" y="3" width="24" height="24" rx="1" fill="#e3e3e3" stroke="#9a9a9a" stroke-width="1.500"/><path d="M13 3v17M3 9h10M13 13h6M4 27L28 6" stroke="#9a9a9a" stroke-width="1.500" fill="none"/></svg></button>
            <button class="tool lit" aria-label="Shaded"><svg viewBox="0 0 30 30"><path d="M15 2l13 6v14l-13 7-13-7V8z" fill="#8fb5fb"/><path d="M15 2l13 6-13 6L2 8z" fill="#c5d9fb"/><path d="M15 2l13 6v14l-13 7-13-7V8zM2 8l13 6 13-6M15 14v15" fill="none" stroke="#344257" stroke-width="1.600"/></svg></button>
            <button class="tool" aria-label="Mesh view"><svg viewBox="0 0 30 30"><rect x="3" y="3" width="24" height="24" fill="#dbe1e9"/><path d="M3 3h11v7H3zM17 11h10v8h-8zM3 20h7v7H3z" fill="#9abcf7"/><path d="M3 10h24M3 19h24M15 3v7l-5 9v8M15 10l5 9v8" fill="none" stroke="#3b444f" stroke-width="1.500"/><rect x="3" y="3" width="24" height="24" rx="1" fill="none" stroke="#3b444f" stroke-width="1.700"/></svg></button>
            <button class="tool" aria-label="Contour"><svg viewBox="0 0 30 30"><path d="M2 8l13 6v15L2 22z" fill="url(#heat)"/><path d="M15 14l13-6v14l-13 7z" fill="url(#heat2)"/><path d="M15 1l13 7-13 6L2 8z" fill="#3a7de8"/><path d="M9 5l12 6-6 3L2 8z" fill="#6fd07c"/><path d="M15 1l13 7v14l-13 7-13-7V8zM2 8l13 6 13-6M15 14v15" fill="none" stroke="#333b48" stroke-width="1.400"/></svg></button>
            <button class="drop" aria-label="Contour options"></button>
            <button class="tool lit" aria-label="Wire cube"><svg viewBox="0 0 30 30"><path d="M15 1l13 6v15l-13 7-13-7V7zM2 7l13 7 13-7M15 14v15M8 4l13 7v15M22 4L8 11v15M2 14l13 7 13-7" fill="#d8e6f5" stroke="#38424e" stroke-width="1.500"/></svg></button>
            <button class="tool" aria-label="Red wire cube"><svg viewBox="0 0 30 30"><path d="M17 1l11 6v15l-13 7-13-7V8zM2 8l12 5 14-6M14 13v15M17 1v16l11 5M17 17L2 22" fill="none" stroke="#e75a4b" stroke-width="1.500"/></svg></button>
            <button class="drop" aria-label="Wire options"></button>
            <button class="tool" aria-label="View settings"><svg viewBox="0 0 30 30"><path d="M15 2l13 6v14l-13 7-12-6V9z" fill="url(#steel)"/><path d="M16 2l12 6v14l-12 7-13-6V14M8 12l8 3 12-7M16 15v14" fill="none" stroke="#555" stroke-width="1.500"/><path d="M0 0h15v12H0z" fill="#efefef"/><path d="M4 1v6M11 7v6" stroke="#4a80f0" stroke-width="1.500"/><rect x="2" y="7" width="4" height="4" fill="#fff" stroke="#4a80f0" stroke-width="1.400"/><rect x="9" y="2" width="4" height="5" fill="#fff" stroke="#4a80f0" stroke-width="1.400"/></svg></button>
            <button class="drop" aria-label="View options"></button>
            <button class="chev" aria-label="More"></button>
          </div>
          <div class="pair">
            <div class="tb"><i class="grip"></i>
              <button class="tool lit" aria-label="Auto green"><svg viewBox="0 0 30 30"><path d="M3 14h24v15H3z" fill="#b5e8dc"/><rect x="2" y="2" width="15" height="9" rx="4.500" fill="#3a78f0"/><circle cx="13" cy="6.500" r="3.300" fill="#fff"/><path d="M19 4h8v25M4 13v16" fill="none" stroke="#35a244" stroke-width="1.600"/><path d="M25 2h4v4h-4z" fill="#42484f"/></svg></button>
              <button class="tool" aria-label="Green solid"><svg viewBox="0 0 30 30"><path d="M8 3h20v26H3V9z" fill="#c0e8bd" stroke="#42584a" stroke-width="1.700"/><path d="M8 3v26" stroke="#42584a" stroke-width="1.500"/></svg></button>
              <button class="tool" aria-label="Green grid"><svg viewBox="0 0 30 30"><path d="M8 3h20v26H3V9z" fill="#e0f1df" stroke="#42584a" stroke-width="1.700"/><path d="M8 3v26M18 4v24M8 12h20" stroke="#17a622" stroke-width="2" stroke-dasharray="4 2"/></svg></button>
              <button class="chev" aria-label="More"></button>
            </div>
            <div class="tb far"><i class="grip"></i>
              <button class="tool lit" aria-label="Auto curve"><svg viewBox="0 0 30 30"><rect x="1" y="2" width="15" height="9" rx="4.500" fill="#3a78f0"/><circle cx="12" cy="6.500" r="3.300" fill="#fff"/><path d="M18 6h5" stroke="#444" stroke-width="1.500"/><circle cx="25" cy="6" r="2.300" fill="#fff" stroke="#dd3f7d" stroke-width="1.500"/><circle cx="4" cy="15" r="2.300" fill="#fff" stroke="#dd3f7d" stroke-width="1.500"/></svg></button>
              <span class="split"><button class="tool" aria-label="Point face"><svg viewBox="0 0 30 30"><rect x="3" y="4" width="24" height="25" fill="#d3cce8" stroke="#42484f" stroke-width="1.700"/><path d="M12 14h5v5h-5z" fill="#dd3f7d"/></svg></button><button class="drop" aria-label="Point options"></button></span>
              <span class="split"><button class="tool" aria-label="Curve"><svg viewBox="0 0 30 30"><path d="M4 15q6-9 20-9" fill="none" stroke="#42484f" stroke-width="1.600"/><circle cx="26" cy="6" r="2.300" fill="#fff" stroke="#dd3f7d" stroke-width="1.500"/><circle cx="4" cy="15" r="2.300" fill="#fff" stroke="#dd3f7d" stroke-width="1.500"/></svg></button><button class="drop" aria-label="Curve options"></button></span>
              <button class="tool" aria-label="Plane"><svg viewBox="0 0 30 30"><path d="M9 11h18l-6 14H1z" fill="#f3d3de" stroke="#504850" stroke-width="1.500"/><path d="M10 3v24" stroke="#dd3f7d" stroke-width="1.600"/></svg></button>
              <button class="chev" aria-label="More"></button>
            </div>
          </div>
        </div>
      </div>
    </div>
  </div>

  <aside class="side">
    <div class="side-head"><h2>TOPO</h2><button type="button" aria-label="Close TOPO"><svg class="s10"><use href="#cross"/></svg></button></div>
    <div class="side-body">
      <section class="group"><h3 class="more">Hot Points</h3><button>Info</button>
        <button>Insert</button><button>Project</button><button>Parametri.</button><button>Delete</button><button>Mult.Proj.</button><button>Intersect</button><button>Release</button><button>Weld Spot</button></section>
      <section class="group"><h3>CONS</h3><button>Info</button>
        <button class="on">Paste</button><button class="fly">Release</button><button>Fill Hole</button><button>Open Hole</button><button>Project</button><button>Break</button></section>
      <section class="group tight"><h3 class="more">Faces</h3><button>Info</button>
        <button>Cut</button><button>Delete</button><button>Undelete</button><button>New</button><button>Set PID</button><button>Topo</button><button>Proj.Cut</button><button class="fly">Mid.Surf.</button><button class="fly">Rm.Logos</button><button class="fly">Fuse</button><button class="fly">Flange</button><button class="fly">Rm.Dbl</button><button class="fly">Plane Cut</button><button class="fly">Offset</button><button>Freeze/Un</button><button>Zone Cut</button><button>Convert</button><button class="fly">Dach</button><button>Intersect</button><button class="fly">Extend</button><button class="fly">Orient</button><button>Modify</button></section>
      <section class="group"><h3 class="more">Surfaces</h3><button>Info</button>
        <button>Coons</button><button>Fit</button><button>Extend</button><button class="fly">Volume</button><button class="fly">Extrude</button><button>Break</button><button>Contoured</button></section>
      <section class="group"><h3 class="more">Curves</h3><button>Info</button>
        <button>Create</button><button>Delete</button><button>Undelete</button><button class="fly">Connect</button><button>Transform</button><button>Imprint</button></section>
      <section class="group"><h3 class="more">Points</h3><button>Info</button>
        <button class="fly">New</button><button>Delete</button><button>Undelete</button><button>Relative</button><button class="fly">On COG</button><button>On Curve</button></section>
      <section class="group"><h3 class="wide">Auxiliaries</h3>
        <button class="fly">Working .</button><button>Fine</button><button class="fly">IGA</button></section>
    </div>
    <div class="side-head"><h2>Options List</h2><button type="button" aria-label="Close options"><svg class="s10"><use href="#cross"/></svg></button></div>
    <div class="opt-body">
      <div class="opt-row"><label for="tol"><svg class="s10" viewBox="0 0 10 10"><path d="M2 0l5 5-5 5" fill="none" stroke="#777" stroke-width="1.400"/></svg>Tolerances</label><select id="tol"><option>middle</option></select></div>
      <p class="credit">CSDN @云创.承结构协会.王柏程</p>
      <svg class="badge" viewBox="0 0 36 10"><path d="M2 10q-3-4 2-5L30 0q5 0 5 10z" fill="#f4622d"/><path d="M13 10q0-2 3-2l12-2 3 4z" fill="#fff"/></svg>
    </div>
  </aside>
</main>
</body>
</html>
```
FILE: styles.css
```css
* { box-sizing: border-box; }
html, body { height: 100%; }
body {
  margin: 0;
  display: flex;
  flex-direction: column;
  overflow: hidden;
  background: #efefef;
  color: #000;
  font: 15px/19px "Liberation Mono", "Noto Sans CJK SC", monospace;
}
h2, h3, p, ul { margin: 0; padding: 0; font-weight: normal; font-size: inherit; }
button, input, select { font: inherit; color: inherit; margin: 0; }
button { padding: 0; border: 0; background: none; white-space: nowrap; }
svg { display: block; flex: none; }
.defs { position: absolute; width: 0; height: 0; }
.s10 { width: 10px; height: 10px; }
.s12 { width: 12px; height: 12px; }
.s14 { width: 14px; height: 14px; }

/* Title bar */
.titlebar { display: flex; align-items: center; flex: none; height: 29px; padding-left: 2px; background: #f3f3f3; color: #868686; }
.app-logo { width: 20px; height: 20px; }
.title { margin-left: 6px; font: 14px/20px "Open Sans", sans-serif; white-space: nowrap; }
.controls { display: flex; margin-left: auto; padding-right: 2px; }
.controls button { display: grid; place-items: center; width: 59px; height: 29px; }
.controls svg { width: 13px; height: 13px; }

/* Menu */
.menurow { display: flex; flex: none; height: 22px; }
.menu { display: flex; flex: 1; gap: 16px; padding: 3px 0 0 7px; background: #fff; }
.search { display: flex; align-items: center; width: 616px; margin-left: 5px; padding: 0 4px 0 5px; background: #fff; border-bottom: 1px solid #7f7f7f; border-top: 1px solid #e6e6e6; }
.search input { flex: 1; min-width: 0; height: 20px; padding: 3px 3px 0; border: 0; background: none; outline: 0; }
.search input::placeholder { color: #808080; opacity: 1; }
.search button + button { margin-left: 5px; }

/* Toolbars */
.topbars { display: grid; grid-template-columns: 304fr 309fr 110fr 454fr 274fr 151fr 317fr; flex: none; height: 44px; }
.tb { display: flex; align-items: flex-start; min-width: 0; padding-top: 1px; }
.grip {
  flex: none; width: 4px; height: 29px; margin: 4px 3px 0 1px;
  background: conic-gradient(at 1px 1px, transparent 75%, #777 0) 0 0 / 3px 3px;
}
.tool, .drop, .chev { position: relative; display: grid; place-items: center; flex: none; height: 35px; }
.tool { width: 37px; }
.tool svg { width: 30px; height: 30px; overflow: visible; }
.drop { width: 15px; }
.drop::before { content: ""; border: 5px solid transparent; border-top-color: #000; border-bottom: 0; }
.drop.gray::before { border-top-color: #777; }
.chev { width: 18px; }
.chev::before { content: ""; width: 8px; height: 8px; margin-right: 6px; border: solid #333; border-width: 2px 2px 0 0; transform: rotate(45deg); }
.fly { position: relative; }
.fly::after { content: ""; position: absolute; right: 2px; bottom: 1px; width: 6px; height: 6px; background: linear-gradient(135deg, transparent 50%, #000 50%); }
.tool.gray::after { opacity: .5; }
.split { display: flex; flex: none; background: #c0dbf2; outline: 1px solid #99cdf6; outline-offset: -1px; }
.split .drop { border-left: 1px solid #99cdf6; }
.lit { background: #cde7fd; outline: 1px solid #9bd0f8; outline-offset: -1px; }
.nas { width: 28px; padding: 2px 0; border: 1px solid #f3917f; border-radius: 2px; background: #f4e9e7; color: #cc2a20; font: bold 12px/17px Roboto, sans-serif; text-align: center; }
.ent { font: 500 15px Roboto, sans-serif; fill: #333; }
.ent.dim { fill: #777; }

/* Work area */
.main { display: flex; flex: 1; min-height: 0; gap: 6px; }
.left { display: flex; flex-direction: column; flex: 1; min-width: 0; }
.viewport { position: relative; flex: 1; min-height: 0; margin-left: 1px; background: linear-gradient(155deg, #adadad, #9c9c9c 55%, #8c8c8c); }
.scene { position: absolute; inset: 0; width: 100%; height: 100%; }
.triad { position: absolute; top: 30px; right: 40px; width: 130px; height: 110px; overflow: visible; }
.partinfo { position: absolute; left: 3px; top: 3px; color: #fff; white-space: nowrap; }

.dialog { position: absolute; left: 828px; top: 246px; width: 268px; border-radius: 8px; background: #f9f9f9; box-shadow: 0 0 0 1px #8a8a8a66, 0 12px 32px #0007; overflow: hidden; }
.dlg-head { display: flex; align-items: center; height: 38px; padding: 0 14px 0 9px; background: #eef3f9; border-bottom: 1px solid #dde1e6; }
.dlg-logo { width: 20px; height: 20px; }
.dlg-head h2 { flex: 1; margin-left: 5px; font: 14px/20px "Open Sans", sans-serif; white-space: nowrap; }
.dlg-body { height: 103px; margin: 0 4px; padding: 14px 11px; border-bottom: 1px solid #999; }
.dlg-body .ask { margin: 13px 0 0 18px; }
.dlg-foot { display: flex; justify-content: space-between; padding: 5px 7px 7px 5px; }
.dlg-foot button { width: 70px; height: 26px; padding-top: 2px; }
.dlg-foot button, .group button { border: 1px solid #cdcdcd; border-bottom-color: #b4b4b4; border-radius: 4px; background: #fdfdfd; }

.status { display: flex; align-items: center; flex: none; height: 29px; padding-left: 3px; white-space: nowrap; }
.status svg { width: 20px; height: 20px; margin-left: 6px; }
.status .msg { margin-left: 14px; padding-left: 24px; border-left: 1px solid #999; line-height: 22px; }

.bottom { display: flex; flex: none; height: 86px; overflow: hidden; }
.logstrip { display: flex; flex-direction: column; justify-content: space-between; align-items: center; width: 33px; padding-top: 4px; background: #dadada; border-right: 1px solid #c0c0c0; }
.pin { width: 14px; height: 12px; }
.log { display: flex; width: 218px; margin: 2px 0 0 6px; border: 1px solid #e0e0e0; border-bottom: 0; background: #fff; overflow: hidden; }
.log ul { flex: 1; min-width: 0; margin-top: -7px; padding-left: 22px; list-style: none; white-space: nowrap; }
.scroll { width: 21px; padding: 50px 8px 0 7px; background: #f0f0f0; }
.scroll i { display: block; height: 13px; background: #858585; }
.dock { display: grid; grid-template-columns: 445fr 446fr 449fr; flex: 1; margin-left: 7px; }
.col { display: flex; flex-direction: column; gap: 14px; min-width: 0; padding-top: 4px; }
.col .tb { flex: none; height: 46px; padding-top: 4px; }
.col .grip { height: 46px; margin-top: -4px; }
.col .tool svg { margin-top: 2px; }
.pair { display: flex; }
.pair .near { margin-left: 13px; }
.pair .far { margin-left: 25px; }

/* Side panel */
.side { display: flex; flex-direction: column; width: 309px; }
.side-head { display: flex; align-items: center; justify-content: space-between; flex: none; height: 33px; padding: 2px 3px 0 1px; background: #dbdbdb; border: 1px solid #b5b5b5; border-right: 0; }
.side-body { display: flex; flex-direction: column; gap: 8px; flex: none; margin: 2px 2px 4px 0; padding: 8px 7px 8px 8px; border: 1px solid #e2e2e2; box-shadow: inset 0 0 0 1px #f9f9f9; }
.group { display: grid; grid-template-columns: repeat(3, minmax(0, 1fr)); grid-auto-rows: 23px; gap: 2px; }
.group.tight { grid-template-rows: 23px 23px 22px 23px 22px 23px 22px 23px 22px; }
.group h3 { grid-column: span 2; align-self: center; padding: 2px 0 0 9px; font-weight: bold; font-size: 16px; }
.group h3.wide { grid-column: span 3; }
.group h3.more::after { content: ""; display: inline-block; margin-left: 6px; border: 4px solid transparent; border-left: 8px solid #000; border-right: 0; vertical-align: 1px; }
.group button { padding-top: 2px; overflow: hidden; }
.group button.fly { padding-right: 8px; }
.group .fly::after { right: 0; bottom: 0; }
.group button.on { background: #cce4f7; border-color: #0c5a9e; }
.opt-body { position: relative; flex: 1; min-height: 0; margin: 2px 2px 0 0; padding: 3px 2px 0; border: 1px solid #e0e0e0; overflow: hidden; background: linear-gradient(#fff, #fff) 2px 3px no-repeat; }
.opt-row { display: flex; height: 23px; border: 1px solid #868a94; }
.opt-row label { display: flex; align-items: center; gap: 4px; flex: 1; padding: 2px 0 0 3px; }
.opt-row select {
  width: 121px; padding: 0 3px; border: 1px solid #c9c9c9; border-left-color: #868a94; border-radius: 3px; appearance: none;
  background:
    linear-gradient(to top right, transparent 50%, #000 50%) right 9px center / 4px 5px no-repeat,
    linear-gradient(to top left, transparent 50%, #000 50%) right 5px center / 4px 5px no-repeat,
    #fdfdfd;
}
.credit { margin: 18px 0 0 7px; color: #999; font: 20px/26px "Liberation Sans", "Noto Sans CJK SC", sans-serif; white-space: nowrap; }
.badge { position: absolute; left: 85px; bottom: 0; width: 36px; height: 10px; }
```
